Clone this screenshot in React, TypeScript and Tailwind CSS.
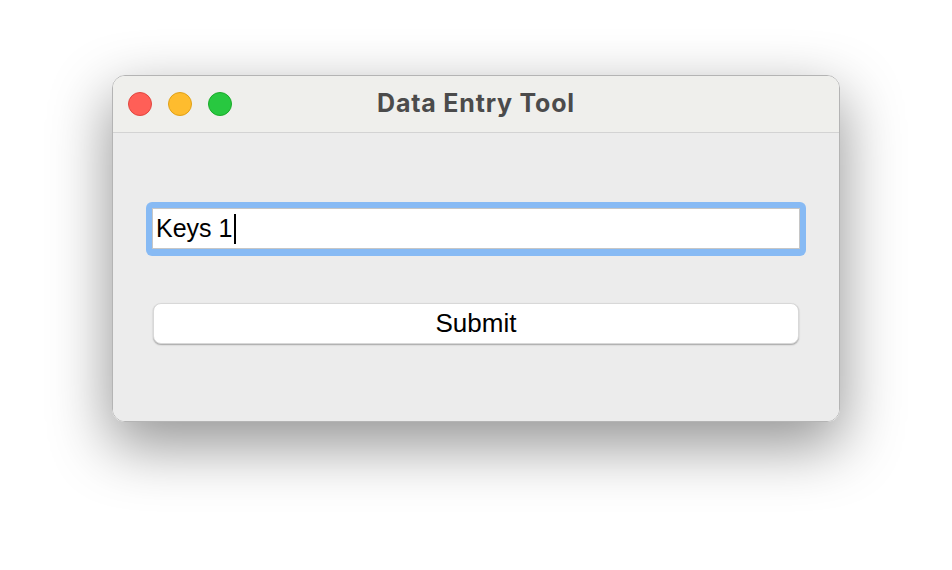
export default function App() {
  return (
    <div className="w-[952px] h-[570px] bg-white pt-[75px] pl-[112px] font-['Liberation_Sans',Arial,sans-serif]">
      <div className="w-[728px] h-[347px] flex flex-col rounded-[13px] border border-[#b4b4b4] overflow-hidden shadow-[0_22px_60px_2px_rgba(0,0,0,0.42)]">
        {/* title bar */}
        <div className="relative h-[57px] shrink-0 flex items-center bg-[#efefec] border-b border-[#d3d3d3]">
          <div className="flex items-center gap-[16px] pl-[15px]">
            <span className="w-[24px] h-[24px] rounded-full bg-[#ff5f57] border border-[#e2463f]" />
            <span className="w-[24px] h-[24px] rounded-full bg-[#febc2e] border border-[#e1a116]" />
            <span className="w-[24px] h-[24px] rounded-full bg-[#28c840] border border-[#1aab29]" />
          </div>
          <div className="absolute inset-0 flex items-center justify-center text-[25px] font-bold text-[#4b4b4b] font-['Inter',sans-serif] tracking-[0.8px]">
            Data Entry Tool
          </div>
        </div>

        {/* body */}
        <div className="flex-1 flex flex-col bg-[#ececec] pt-[69px] px-[33px]">
          <div className="p-[6px] pb-[7px] rounded-[6px] bg-[#87baf4]">
            <div className="h-[41px] flex items-center bg-white border border-[#c6c6c6] pl-[3px] text-[25px] text-black">
              <span>Keys 1</span>
              <span className="ml-[2px] w-[2px] h-[30px] bg-black" />
            </div>
          </div>

          <button
            type="button"
            className="mt-[47px] mx-[7px] h-[41px] rounded-[8px] bg-white border-[0.5px] border-[#d8d8d8] shadow-[0_1px_1.5px_rgba(0,0,0,0.3)] text-[26px] text-black"
          >
            Submit
          </button>
        </div>
      </div>
    </div>
  );
}
